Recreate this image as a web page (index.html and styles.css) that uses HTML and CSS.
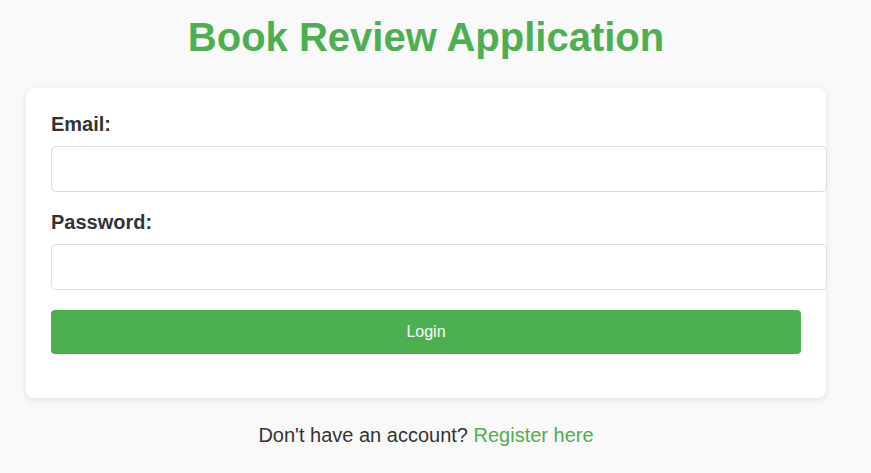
FILE: index.html
```html
<!DOCTYPE html>
<html>
<head>
<meta charset="UTF-8">
<title>Book Review Application</title>
<link rel="stylesheet" href="styles.css">
</head>
<body>
<div class="container">
  <h1 class="title">Book Review Application</h1>

  <form class="card">
    <label for="email">Email:</label>
    <input id="email" type="email">
    <label for="password">Password:</label>
    <input id="password" type="password">
    <button type="button" class="btn">Login</button>
  </form>

  <p class="footer">Don't have an account? <a href="#">Register here</a></p>
</div>
</body>
</html>
```

FILE: styles.css
```css
body {
  margin: 0;
  padding: 0 26px;
  background-color: #f9f9f9;
  font-family: "Liberation Sans", Arial, sans-serif;
  color: #333;
}

.container {
  max-width: 800px;
}

.title {
  font-size: 40px;
  color: #4CAF50;
  text-align: center;
  margin: 15px 0 28px;
}

.card {
  background-color: white;
  padding: 25px 25px 24px;
  border-radius: 8px;
  box-shadow: 0 2px 6px rgba(0, 0, 0, 0.1);
}

.card label {
  display: block;
  font-size: 20px;
  font-weight: bold;
  margin-bottom: 10px;
}

.card input {
  display: block;
  width: 100%;
  height: 18px;
  padding: 13px 12px;
  font-size: 16px;
  border: 1px solid #ddd;
  border-radius: 5px;
  margin: 0 0 19px;
  font-family: inherit;
}

.btn {
  display: block;
  width: 100%;
  height: 44px;
  background-color: #4CAF50;
  color: white;
  border: none;
  border-radius: 4px;
  padding: 0;
  font-size: 16px;
  font-family: inherit;
  cursor: pointer;
  margin: 20px 0;
}

.footer {
  text-align: center;
  font-size: 20px;
  margin: 26px 0 0;
}

.footer a {
  color: #4CAF50;
  text-decoration: none;
}
```
